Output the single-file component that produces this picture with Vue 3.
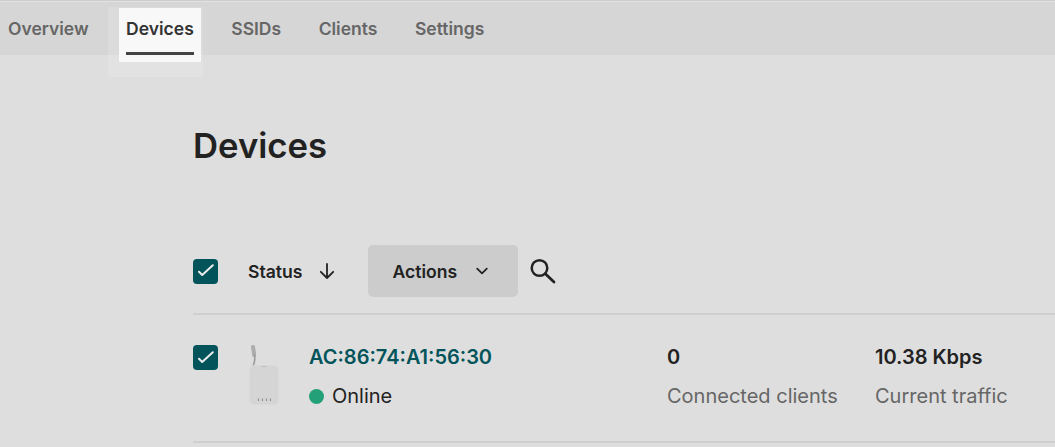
<script setup>
const tabs = ['Overview', 'Devices', 'SSIDs', 'Clients', 'Settings']
</script>

<template>
  <div class="page">
    <nav class="nav">
      <a v-for="t in tabs" :key="t" class="tab" :class="{ active: t === 'Devices' }">
        <span class="tab-label">{{ t }}</span>
      </a>
    </nav>
    <main class="main">
      <h1 class="title">Devices</h1>
      <div class="toolbar">
        <span class="check">
          <svg width="16" height="16" viewBox="0 0 16 16" fill="none"><path d="M1 8.800 4.200 12 14.800 2.200" stroke="#ececec" stroke-width="2" stroke-linecap="round" stroke-linejoin="round"/></svg>
        </span>
        <span class="sort">Status</span>
        <svg class="arrow" width="18" height="18" viewBox="0 0 18 18" fill="none"><path d="M9 2v14M2.800 9.800 9 16l6.200-6.200" stroke="#222" stroke-width="1.800" stroke-linecap="round" stroke-linejoin="round"/></svg>
        <button class="actions">
          <span>Actions</span>
          <svg width="14" height="14" viewBox="0 0 14 14" fill="none"><path d="M2.200 4.700 7 9.300l4.800-4.600" stroke="#222" stroke-width="1.800" stroke-linecap="round" stroke-linejoin="round"/></svg>
        </button>
        <svg class="search" width="26" height="26" viewBox="0 0 26 26" fill="none"><circle cx="9.500" cy="10" r="7.800" stroke="#222" stroke-width="2.500"/><path d="M15.300 15.800 24 24" stroke="#222" stroke-width="2.800" stroke-linecap="round"/></svg>
      </div>
      <div class="row">
        <span class="check">
          <svg width="16" height="16" viewBox="0 0 16 16" fill="none"><path d="M1 8.800 4.200 12 14.800 2.200" stroke="#ececec" stroke-width="2" stroke-linecap="round" stroke-linejoin="round"/></svg>
        </span>
        <svg class="device" width="30" height="60" viewBox="0 0 30 60" fill="none">
          <path d="M4 2c.5 2.500 1 5 1.200 8" stroke="#adadad" stroke-width="4" stroke-linecap="round"/>
          <path d="M5.500 10c.8 4 .2 7-1.200 10.500" stroke="#9c9c9c" stroke-width="1.700" stroke-linecap="round"/>
          <rect x="0" y="20" width="30" height="40" rx="5.500" fill="#d9d9d9"/>
          <rect x="1" y="21" width="28" height="38" rx="4.500" fill="#d5d5d5"/>
          <path d="M12 21.500h6" stroke="#c0c0c0" stroke-width="1"/>
          <path d="M9.500 56v-2.500M13.500 56v-2.500M17.500 56v-2.500M21.500 56v-2.500" stroke="#8f8f8f" stroke-width="1.100"/>
        </svg>
        <div class="id-col">
          <a class="mac">AC:86:74:A1:56:30</a>
          <div class="status"><i class="dot"></i>Online</div>
        </div>
        <div class="metric clients">
          <strong>0</strong>
          <span>Connected clients</span>
        </div>
        <div class="metric">
          <strong>10.38 Kbps</strong>
          <span>Current traffic</span>
        </div>
      </div>
    </main>
  </div>
</template>

<style>
html, body { margin: 0; background: #dedede; overflow: hidden; }
</style>

<style scoped>
.page {
  width: 1055px;
  height: 447px;
  overflow: hidden;
  background: #dedede;
  font-family: Inter, "Liberation Sans", sans-serif;
  color: #222;
  border-top: 1px solid #cdcdcd;
  box-sizing: border-box;
}
.nav {
  position: relative;
  z-index: 0;
  display: flex;
  gap: 23.5px;
  height: 54px;
  padding: 0 0 0 1px;
  background: #d6d6d6;
  box-sizing: border-box;
  border-top: 1px solid #e2e2e2;
}
.tab {
  position: relative;
  height: 54px;
  margin-top: 6px;
  padding: 0 7px;
  font-size: 17.5px;
  font-weight: 600;
  color: #666;
  box-sizing: border-box;
}
.tab-label {
  display: block;
  height: 44px;
  line-height: 41px;
}
.tab.active {
  background: #f8f8f8;
  color: #333;
}
.tab.active .tab-label {
  border-bottom: 3px solid #444;
}
.tab.active::before {
  content: "";
  position: absolute;
  z-index: -1;
  left: -11px;
  right: -2px;
  top: -1px;
  bottom: -15px;
  background: rgba(255, 255, 255, 0.12);
}
.main {
  padding-left: 193px;
}
.title {
  margin: 0;
  padding-top: 69px;
  height: 50px;
  font-size: 34.7px;
  line-height: 42px;
  font-weight: 600;
  color: #222;
}
.toolbar {
  display: flex;
  align-items: center;
  height: 52px;
  margin-top: 71px;
  padding-bottom: 16px;
  border-bottom: 2px solid #cfcfcf;
}
.check {
  display: flex;
  align-items: center;
  justify-content: center;
  width: 25px;
  height: 25px;
  border-radius: 4px;
  background: #02545a;
  flex: none;
}
.row .check { margin-top: 30px; }
.sort {
  margin-left: 30px;
  font-size: 17.6px;
  font-weight: 600;
}
.arrow { margin-left: 15px; }
.actions {
  display: flex;
  align-items: center;
  width: 150px;
  height: 52px;
  margin-left: 32px;
  padding: 0 0 0 25px;
  border: 0;
  border-radius: 5px;
  background: #cccccc;
  font: 600 17.6px Inter, "Liberation Sans", sans-serif;
  color: #222;
  box-sizing: border-box;
}
.actions svg { margin-left: 18px; }
.search { margin-left: 12px; }
.row {
  display: flex;
  height: 126px;
  border-bottom: 2px solid #cfcfcf;
}
.device { margin: 30px 0 0 31px; flex: none; }
.id-col {
  margin-left: 30px;
  width: 358px;
  padding-top: 30px;
  box-sizing: border-box;
}
.mac {
  display: block;
  font-size: 20px;
  line-height: 24px;
  font-weight: 600;
  color: #02545a;
}
.status {
  display: flex;
  align-items: center;
  margin-top: 15px;
  font-size: 20px;
  line-height: 24px;
  color: #222;
}
.dot {
  width: 15px;
  height: 15px;
  border-radius: 50%;
  background: #23a078;
  margin-right: 8px;
}
.metric {
  display: flex;
  flex-direction: column;
  padding-top: 30px;
}
.clients { width: 208px; }
.metric strong {
  font-size: 20px;
  line-height: 24px;
  font-weight: 600;
  color: #222;
}
.metric span {
  margin-top: 15px;
  font-size: 20px;
  line-height: 24px;
  color: #666;
}
</style>
